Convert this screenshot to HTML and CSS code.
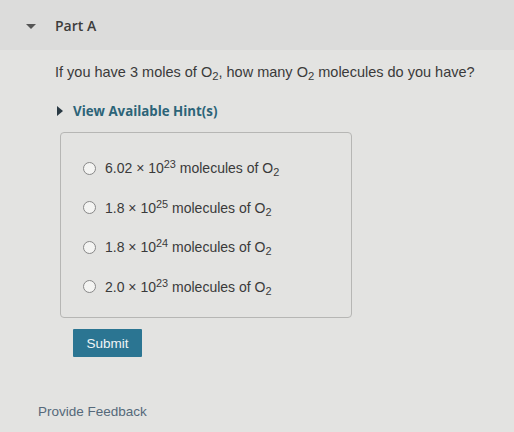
FILE: index.html
```html
<!DOCTYPE html>
<html>
<head>
<meta charset="utf-8">
<link rel="stylesheet" href="styles.css">
</head>
<body>
<div class="page">
  <div class="part-header">
    <span class="caret-down"></span>
    <span class="part-title">Part A</span>
  </div>
  <div class="content">
    <p class="question">If you have 3 moles of O<sub>2</sub>, how many O<sub>2</sub> molecules do you have?</p>
    <div class="hint"><span class="caret-right"></span><span class="hint-text">View Available Hint(s)</span></div>
    <div class="choices">
      <label class="choice"><span class="radio"></span><span>6.02 × 10<sup>23</sup> molecules of O<sub>2</sub></span></label>
      <label class="choice"><span class="radio"></span><span>1.8 × 10<sup>25</sup> molecules of O<sub>2</sub></span></label>
      <label class="choice"><span class="radio"></span><span>1.8 × 10<sup>24</sup> molecules of O<sub>2</sub></span></label>
      <label class="choice"><span class="radio"></span><span>2.0 × 10<sup>23</sup> molecules of O<sub>2</sub></span></label>
    </div>
    <button class="submit">Submit</button>
  </div>
  <div class="feedback">Provide Feedback</div>
</div>
</body>
</html>
```

FILE: styles.css
```css
html, body {
  margin: 0;
  padding: 0;
}
body {
  width: 514px;
  height: 432px;
  overflow: hidden;
  background: #e3e3e1;
  font-family: "Liberation Sans", Arial, sans-serif;
  color: #3a3a3a;
}
.page {
  display: flex;
  flex-direction: column;
}
.part-header {
  height: 50px;
  background: #dcdcdb;
  display: flex;
  align-items: center;
  padding-left: 26px;
  gap: 19px;
  box-sizing: border-box;
}
.caret-down {
  width: 0;
  height: 0;
  border-left: 5px solid transparent;
  border-right: 5px solid transparent;
  border-top: 5px solid #555;
  margin-top: 2px;
}
.part-title {
  font-family: "Open Sans", "Liberation Sans", sans-serif;
  font-weight: 600;
  font-size: 14px;
  color: #3c3c3c;
  margin-top: 0;
}
.content {
  padding-left: 55px;
  display: flex;
  flex-direction: column;
  align-items: flex-start;
}
.question {
  margin: 13px 0 0 0;
  font-size: 14.5px;
  line-height: 18px;
  color: #3a3a3a;
}
sub, sup {
  font-size: 0.78em;
  line-height: 0;
  position: relative;
  vertical-align: baseline;
}
sub {
  top: 0.3em;
}
sup {
  top: -0.45em;
}
.hint {
  display: flex;
  align-items: center;
  margin-top: 21px;
  margin-left: 2px;
  gap: 10px;
}
.caret-right {
  width: 0;
  height: 0;
  border-top: 5px solid transparent;
  border-bottom: 5px solid transparent;
  border-left: 6px solid #2a3a44;
}
.hint-text {
  font-family: "Open Sans", "Liberation Sans", sans-serif;
  font-weight: 700;
  font-size: 13.3px;
  color: #2c6478;
}
.choices {
  margin-top: 12px;
  margin-left: 5px;
  width: 292px;
  height: 186px;
  box-sizing: border-box;
  border: 1px solid #b6b6b4;
  border-radius: 4px;
  padding: 26px 0 0 22px;
  display: flex;
  flex-direction: column;
  gap: 21.5px;
}
.choice {
  display: flex;
  align-items: center;
  gap: 9px;
  font-size: 14px;
  line-height: 18px;
  height: 18px;
  color: #3a3a3a;
}
.radio {
  width: 11px;
  height: 11px;
  border: 1.5px solid #888;
  border-radius: 50%;
  background: #f4f4f2;
  flex: none;
}
.submit {
  margin-top: 11px;
  margin-left: 18px;
  width: 69px;
  height: 28px;
  border: none;
  border-radius: 1px;
  background: #2b7592;
  color: #f0f4f6;
  font-family: "Liberation Sans", Arial, sans-serif;
  font-size: 13.5px;
  padding: 0;
}
.feedback {
  margin-top: 47px;
  margin-left: 38px;
  font-size: 13.5px;
  color: #55697a;
}
```
